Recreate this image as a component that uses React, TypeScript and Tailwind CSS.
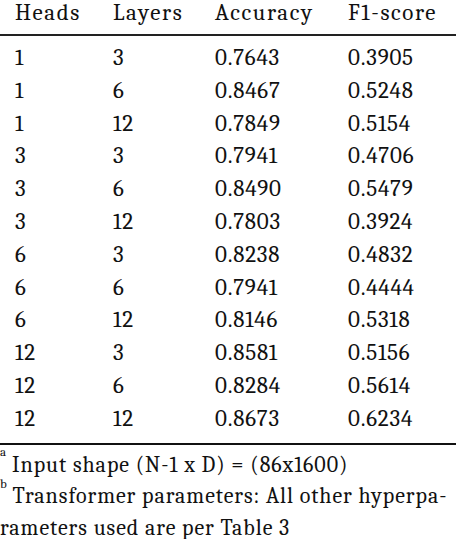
import React from 'react';

const rows: [string, string, string, string][] = [
  ['1', '3', '0.7643', '0.3905'],
  ['1', '6', '0.8467', '0.5248'],
  ['1', '12', '0.7849', '0.5154'],
  ['3', '3', '0.7941', '0.4706'],
  ['3', '6', '0.8490', '0.5479'],
  ['3', '12', '0.7803', '0.3924'],
  ['6', '3', '0.8238', '0.4832'],
  ['6', '6', '0.7941', '0.4444'],
  ['6', '12', '0.8146', '0.5318'],
  ['12', '3', '0.8581', '0.5156'],
  ['12', '6', '0.8284', '0.5614'],
  ['12', '12', '0.8673', '0.6234'],
];

const Row = ({ cells, className }: { cells: string[]; className: string }) => (
  <div className={`grid grid-cols-[98px_102px_133px_1fr] pl-[15px] ${className}`}>
    {cells.map((c, i) => <span key={i}>{c}</span>)}
  </div>
);

// font-serif resolves to Times New Roman -> Liberation Serif here
const App = () => {
  return <div className="w-[460px] h-[539px] bg-white text-[#111] overflow-hidden font-serif text-[23px]">
      <div className="w-[456px]">
        <Row cells={['Heads', 'Layers', 'Accuracy', 'F1-score']} className="h-[34px] leading-[26px] tracking-[1.6px]" />
        <div className="h-[2px] bg-[#222]" />
        <div className="pt-[6px] pb-[7px] tracking-[0.8px]">
          {rows.map((r, i) => <Row key={i} cells={r} className="h-[32.8px] leading-[32px]" />)}
        </div>
        <div className="h-[2px] bg-[#111]" />
      </div>
      <div className="text-[22px] tracking-[0.95px] leading-[31.5px] pt-[5px] whitespace-nowrap">
        <p><sup className="text-[13px] align-[9px] tracking-normal">a</sup> Input shape (N-1 x D) = (86x1600)</p>
        <p><sup className="text-[13px] align-[9px] tracking-normal">b</sup> Transformer parameters: All other hyperpa-<br />rameters used are per Table 3</p>
      </div>
    </div>;
};

export default App;
